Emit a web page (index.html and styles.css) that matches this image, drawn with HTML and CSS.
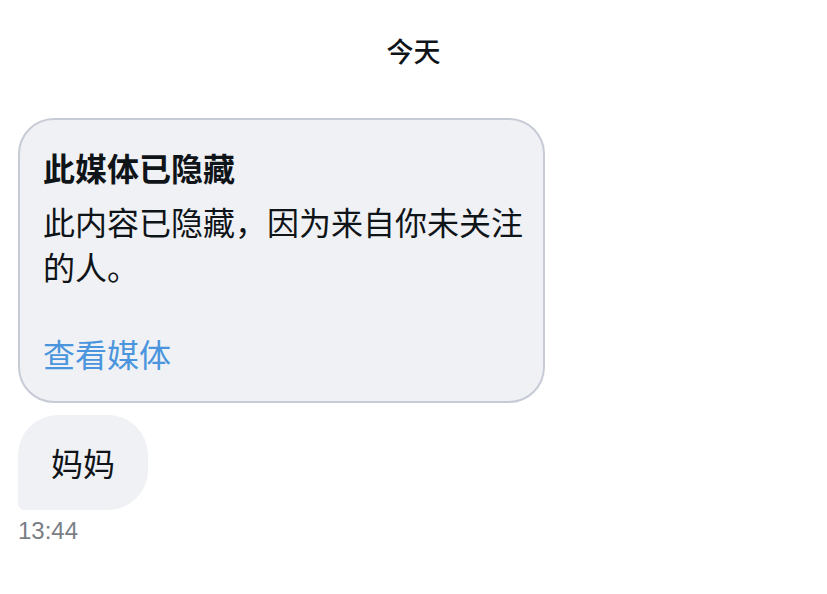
FILE: index.html
```html
<!DOCTYPE html>
<html lang="zh-CN">
<head>
  <meta charset="UTF-8" />
  <title>今天</title>
  <link rel="stylesheet" href="styles.css">
</head>
<body>
  <div class="chat">
    <div class="day">今天</div>

    <div class="hidden-card">
      <div class="hidden-title">此媒体已隐藏</div>
      <div class="hidden-text">此内容已隐藏，因为来自你未关注的人。</div>
      <a class="hidden-link" href="#">查看媒体</a>
    </div>

    <div class="bubble">妈妈</div>
    <div class="time">13:44</div>
  </div>
</body>
</html>
```

FILE: styles.css
```css
body {
  margin: 0;
  background: #fff;
  font-family: "Noto Sans CJK SC", "Noto Sans", sans-serif;
  color: #0f1419;
}
.chat {
  padding: 33px 18px 0;
  display: flex;
  flex-direction: column;
  align-items: flex-start;
}
.day {
  align-self: stretch;
  text-align: center;
  font-size: 27px;
  line-height: 36px;
  font-weight: 500;
  margin-bottom: 49px;
}
.hidden-card {
  box-sizing: border-box;
  width: 527px;
  padding: 25px 16px 25px 23px;
  background: #eff1f4;
  border: 2px solid #c6cbd5;
  border-radius: 36px;
}
.hidden-title {
  font-size: 32px;
  line-height: 45px;
  font-weight: 700;
  margin-bottom: 9px;
}
.hidden-text {
  font-size: 32px;
  line-height: 45px;
  margin-bottom: 42px;
}
.hidden-link {
  display: block;
  font-size: 32px;
  line-height: 45px;
  color: #4a95dd;
  text-decoration: none;
}
.bubble {
  margin-top: 12px;
  padding: 25px 33px;
  background: #eff1f4;
  border-radius: 40px 40px 40px 6px;
  font-size: 32px;
  line-height: 45px;
}
.time {
  margin-top: 7px;
  font-family: "Liberation Sans", "Noto Sans", sans-serif;
  font-size: 24px;
  line-height: 28px;
  color: #7a7e85;
}
```
